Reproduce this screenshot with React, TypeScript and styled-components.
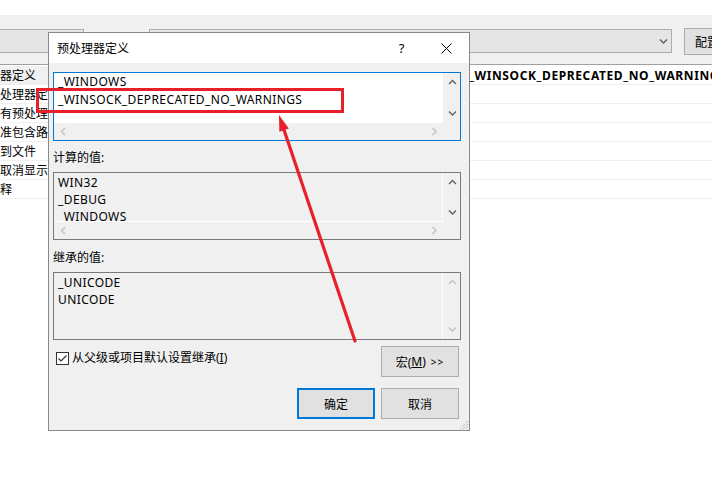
import React from "react";
import styled, { createGlobalStyle } from "styled-components";

const GlobalStyle = createGlobalStyle`
  html, body {
    margin: 0;
    padding: 0;
    background: #fff;
  }
  body {
    width: 712px;
    height: 488px;
    overflow: hidden;
    font-family: "Noto Sans", "Noto Sans CJK SC", sans-serif;
    font-size: 12px;
    color: #000;
  }
`;

const Screen = styled.div`
  position: relative;
  width: 712px;
  height: 488px;
  overflow: hidden;
  background: #fff;
`;

/* ---------- property page behind the dialog ---------- */

const TopGap = styled.div`
  height: 15px;
  background: #fff;
`;

const Toolbar = styled.div`
  height: 49px;
  box-sizing: border-box;
  padding-top: 13px;
  background: #f0f0f0;
  display: flex;
  align-items: flex-start;
`;

const PlatformBox = styled.div`
  width: 84px;
  height: 24px;
  margin-top: 1px;
  box-sizing: border-box;
  background: #e5e5e5;
  border: 1px solid #adadad;
  border-left: none;
  flex: none;
`;

const ConfigCombo = styled.div`
  width: 523px;
  height: 24px;
  margin: 1px 0 0 65px;
  box-sizing: border-box;
  background: #e5e5e5;
  border: 1px solid #adadad;
  display: flex;
  align-items: center;
  justify-content: flex-end;
  padding-right: 3px;
  flex: none;
`;

const ConfigButton = styled.div`
  width: 90px;
  height: 27px;
  margin-left: 12px;
  box-sizing: border-box;
  background: #e1e1e1;
  border: 1px solid #adadad;
  padding-left: 10px;
  display: flex;
  align-items: center;
  white-space: nowrap;
  flex: none;
`;

const PropGrid = styled.div`
  border-top: 1px solid #a0a0a0;
  padding-top: 1px;
`;

const PropRow = styled.div`
  display: grid;
  grid-template-columns: 469px 1fr;
  height: 19px;
  box-sizing: border-box;
  border-bottom: 1px solid #f0f0f0;
`;

const NameCell = styled.div<{ $selected?: boolean }>`
  background: ${(p) => (p.$selected ? "#f0f0f0" : "transparent")};
  overflow: hidden;
  white-space: nowrap;
  display: flex;
  align-items: center;
`;

const NameText = styled.span`
  margin-left: -36px;
`;

const ValueCell = styled.div`
  font-weight: bold;
  letter-spacing: 0.6px;
  overflow: hidden;
  white-space: nowrap;
  display: flex;
  align-items: center;
`;

/* ---------- dialog ---------- */

const Dialog = styled.div`
  position: absolute;
  left: 48px;
  top: 32px;
  width: 422px;
  height: 399px;
  box-sizing: border-box;
  border: 1px solid #888;
  background: #f0f0f0;
  display: flex;
  flex-direction: column;
`;

const TitleBar = styled.div`
  height: 30px;
  flex: none;
  background: #fff;
  display: flex;
  align-items: center;
  padding-left: 8px;
`;

const TitleText = styled.div`
  flex: 1;
`;

const CaptionButton = styled.div`
  width: 45px;
  height: 30px;
  display: flex;
  align-items: center;
  justify-content: center;
  font-size: 13px;
`;

const Body = styled.div`
  flex: 1;
  position: relative;
  padding: 9px 8px 0 4px;
  display: flex;
  flex-direction: column;
`;

const FieldLabel = styled.div<{ $top: number }>`
  height: 18px;
  line-height: 18px;
  margin: ${(p) => p.$top}px 0 5px 0;
`;

const ListFrame = styled.div<{ $h: number; $focus?: boolean }>`
  height: ${(p) => p.$h}px;
  box-sizing: border-box;
  border: 1px solid ${(p) => (p.$focus ? "#0078d7" : "#7a7a7a")};
  background: #f0f0f0;
  display: grid;
  grid-template-columns: 1fr 17px;
  grid-template-rows: 1fr auto;
  flex: none;
`;

const ListContent = styled.div<{ $editable?: boolean; $lh: number; $hasH?: boolean }>`
  background: ${(p) => (p.$editable ? "#fff" : "#f0f0f0")};
  border-right: ${(p) => (p.$editable ? "none" : "1px solid #fff")};
  border-bottom: ${(p) => (!p.$editable && p.$hasH ? "1px solid #fff" : "none")};
  overflow: hidden;
  padding: ${(p) => (p.$editable ? 0 : 1)}px 4px 0;
  line-height: ${(p) => p.$lh}px;
  letter-spacing: 0.4px;
  white-space: nowrap;
`;

const VScroll = styled.div`
  display: flex;
  flex-direction: column;
  justify-content: space-between;
  align-items: center;
  padding: 6px 0 6px 1px;
`;

const HScroll = styled.div`
  height: 17px;
  display: flex;
  align-items: center;
  justify-content: space-between;
  padding: 0 5px 0 6px;
`;

const CheckRow = styled.div`
  display: flex;
  justify-content: space-between;
  align-items: flex-start;
  margin-top: 6px;
  padding-right: 2px;
`;

const CheckLabel = styled.label`
  display: flex;
  align-items: center;
  gap: 3px;
  margin: 3px 0 0 3px;
  line-height: 18px;
`;

const ButtonRow = styled.div`
  display: flex;
  justify-content: flex-end;
  gap: 6px;
  margin-top: 11px;
  padding-right: 2px;
`;

const PushButton = styled.div<{ $default?: boolean }>`
  width: 78px;
  height: 31px;
  box-sizing: border-box;
  background: #e1e1e1;
  border: ${(p) => (p.$default ? "2px solid #0078d7" : "1px solid #adadad")};
  display: flex;
  align-items: center;
  justify-content: center;
  white-space: nowrap;
`;

const Accel = styled.span`
  text-decoration: underline;
`;

const MoreMark = styled.span`
  margin-left: 5px;
  font-size: 10px;
  letter-spacing: 1px;
`;

const Grip = styled.svg`
  position: absolute;
  right: 0;
  bottom: 0;
`;

const Overlay = styled.svg`
  position: absolute;
  left: 0;
  top: 0;
  pointer-events: none;
`;

/* ---------- small drawings ---------- */

type Dir = "up" | "down" | "left" | "right";

const chevronPoints: Record<Dir, string> = {
  up: "1,5 4.5,1.5 8,5",
  down: "1,1.5 4.5,5 8,1.5",
  left: "5,1 1.5,4.5 5,8",
  right: "1.5,1 5,4.5 1.5,8",
};

function Chevron({ dir, color }: { dir: Dir; color: string }) {
  const vertical = dir === "up" || dir === "down";
  return (
    <svg width={vertical ? 9 : 7} height={vertical ? 7 : 9} style={{ display: "block" }}>
      <polyline points={chevronPoints[dir]} fill="none" stroke={color} strokeWidth={1.4} />
    </svg>
  );
}

const DARK = "#606060";
const LIGHT = "#c2c2c2";

function CheckBox() {
  return (
    <svg width={13} height={13} style={{ display: "block" }}>
      <rect x={0.5} y={0.5} width={12} height={12} fill="#fff" stroke="#333" />
      <polyline points="2.5,6.5 5,9 10.5,3.5" fill="none" stroke="#333" strokeWidth={1.2} />
    </svg>
  );
}

const gridRows = [
  { name: "预处理器定义", value: "_WINSOCK_DEPRECATED_NO_WARNINGS;%(PreprocessorDefinitions)", selected: true },
  { name: "取消预处理器定义", value: "" },
  { name: "取消所有预处理器定义", value: "" },
  { name: "忽略标准包含路径", value: "" },
  { name: "预处理到文件", value: "" },
  { name: "预处理取消显示行号", value: "" },
  { name: "保留注释", value: "" },
];

// arrow from the buttons area up to the edited definition
const tip = { x: 279, y: 115 };
const tail = { x: 355, y: 341 };
const len = Math.hypot(tail.x - tip.x, tail.y - tip.y);
const ux = (tail.x - tip.x) / len;
const uy = (tail.y - tip.y) / len;
const headLen = 16;
const headHalf = 5;
const bx = tip.x + ux * headLen;
const by = tip.y + uy * headLen;
const headPoints = `${tip.x},${tip.y} ${bx - uy * headHalf},${by + ux * headHalf} ${bx + uy * headHalf},${by - ux * headHalf}`;

export default function App() {
  return (
    <>
      <GlobalStyle />
      <Screen>
        <TopGap />
        <Toolbar>
          <PlatformBox />
          <ConfigCombo>
            <Chevron dir="down" color={DARK} />
          </ConfigCombo>
          <ConfigButton>配置管理器(O)...</ConfigButton>
        </Toolbar>
        <PropGrid>
          {gridRows.map((r) => (
            <PropRow key={r.name}>
              <NameCell $selected={r.selected}>
                <NameText>{r.name}</NameText>
              </NameCell>
              <ValueCell>{r.value}</ValueCell>
            </PropRow>
          ))}
        </PropGrid>

        <Dialog>
          <TitleBar>
            <TitleText>预处理器定义</TitleText>
            <CaptionButton>?</CaptionButton>
            <CaptionButton>
              <svg width={11} height={11} style={{ display: "block" }}>
                <path d="M0.5 0.5 L10.5 10.5 M10.5 0.5 L0.5 10.5" stroke="#000" strokeWidth={1} />
              </svg>
            </CaptionButton>
          </TitleBar>
          <Body>
            <ListFrame $h={69} $focus>
              <ListContent $editable $lh={18}>
                <div>_WINDOWS</div>
                <div>_WINSOCK_DEPRECATED_NO_WARNINGS</div>
              </ListContent>
              <VScroll>
                <Chevron dir="up" color={DARK} />
                <Chevron dir="down" color={DARK} />
              </VScroll>
              <HScroll>
                <Chevron dir="left" color={LIGHT} />
                <Chevron dir="right" color={LIGHT} />
              </HScroll>
              <div />
            </ListFrame>

            <FieldLabel $top={8}>计算的值:</FieldLabel>
            <ListFrame $h={68}>
              <ListContent $lh={17} $hasH>
                <div>WIN32</div>
                <div>_DEBUG</div>
                <div>_WINDOWS</div>
              </ListContent>
              <VScroll>
                <Chevron dir="up" color={DARK} />
                <Chevron dir="down" color={DARK} />
              </VScroll>
              <HScroll>
                <Chevron dir="left" color={LIGHT} />
                <Chevron dir="right" color={LIGHT} />
              </HScroll>
              <div />
            </ListFrame>

            <FieldLabel $top={9}>继承的值:</FieldLabel>
            <ListFrame $h={68}>
              <ListContent $lh={17}>
                <div>_UNICODE</div>
                <div>UNICODE</div>
              </ListContent>
              <VScroll>
                <Chevron dir="up" color={LIGHT} />
                <Chevron dir="down" color={LIGHT} />
              </VScroll>
            </ListFrame>

            <CheckRow>
              <CheckLabel>
                <CheckBox />
                <span>
                  从父级或项目默认设置继承(<Accel>I</Accel>)
                </span>
              </CheckLabel>
              <PushButton>
                宏(<Accel>M</Accel>)<MoreMark>&gt;&gt;</MoreMark>
              </PushButton>
            </CheckRow>

            <ButtonRow>
              <PushButton $default>确定</PushButton>
              <PushButton>取消</PushButton>
            </ButtonRow>

            <Grip width={11} height={11}>
              <path d="M10 2 L2 10 M10 5 L5 10 M10 8 L8 10" stroke="#a0a0a0" strokeWidth={1} strokeDasharray="1 1" />
            </Grip>
          </Body>
        </Dialog>

        <Overlay width={712} height={488}>
          <rect x={37.5} y={89.5} width={305} height={22} fill="none" stroke="#e8202a" strokeWidth={3} />
          <line
            x1={tail.x}
            y1={tail.y}
            x2={tip.x + ux * 10}
            y2={tip.y + uy * 10}
            stroke="#e8202a"
            strokeWidth={3.2}
            strokeLinecap="round"
          />
          <polygon points={headPoints} fill="#e8202a" />
        </Overlay>
      </Screen>
    </>
  );
}
